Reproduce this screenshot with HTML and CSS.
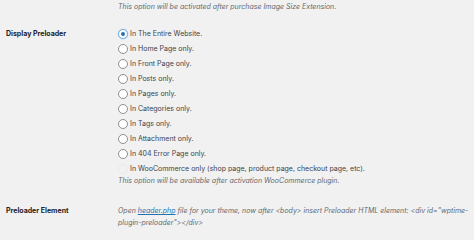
FILE: index.html
```html
<!DOCTYPE html>
<html>
<head>
<meta charset="utf-8">
<link rel="stylesheet" href="styles.css">
</head>
<body>
<div class="page">
  <p class="desc top-desc">This option will be activated after purchase Image Size Extension.</p>
  <div class="row">
    <div class="label">Display Preloader</div>
    <div class="field">
      <ul class="radios">
        <li class="opt"><span class="radio checked"></span>In The Entire Website.</li>
        <li class="opt"><span class="radio"></span>In Home Page only.</li>
        <li class="opt"><span class="radio"></span>In Front Page only.</li>
        <li class="opt"><span class="radio"></span>In Posts only.</li>
        <li class="opt"><span class="radio"></span>In Pages only.</li>
        <li class="opt"><span class="radio"></span>In Categories only.</li>
        <li class="opt"><span class="radio"></span>In Tags only.</li>
        <li class="opt"><span class="radio"></span>In Attachment only.</li>
        <li class="opt"><span class="radio"></span>In 404 Error Page only.</li>
        <li class="opt"><span class="radio disabled"></span>In WooCommerce only (shop page, product page, checkout page, etc).</li>
      </ul>
      <p class="desc">This option will be available after activation WooCommerce plugin.</p>
    </div>
  </div>
  <div class="row row-element">
    <div class="label">Preloader Element</div>
    <div class="field">
      <p class="desc desc-long">Open <a class="link" href="#">header.php</a> file for your theme, now after &lt;body&gt; insert Preloader HTML element: &lt;div id="wptime-plugin-preloader"&gt;&lt;/div&gt;</p>
    </div>
  </div>
</div>
</body>
</html>
```
FILE: styles.css
```css
html, body {
  margin: 0;
  padding: 0;
  background: #f1f1f1;
}
body {
  font-family: Inter, "Liberation Sans", sans-serif;
  font-size: 7px;
  color: #3c434a;
}
.page {
  padding: 2px 4px 0 6px;
}
p { margin: 0; }
.desc {
  font-style: italic;
  color: #646970;
  line-height: 10px;
}
.top-desc {
  margin-left: 112px;
}
.row {
  display: grid;
  grid-template-columns: 112px 1fr;
  margin-top: 14px;
}
.label {
  font-weight: 700;
  color: #1d2327;
  line-height: 15px;
}
.radios {
  list-style: none;
  margin: 0;
  padding: 0;
}
.opt {
  display: flex;
  align-items: center;
  height: 15px;
  gap: 2px;
}
.radio {
  box-sizing: border-box;
  width: 10px;
  height: 10px;
  border: 1px solid #8c8f94;
  border-radius: 50%;
  background: #fff;
  flex: none;
  position: relative;
}
.radio.checked {
  border-color: #72aee6;
  box-shadow: 0 0 0 0.5px #c5d9ed;
}
.radio.checked::after {
  content: "";
  position: absolute;
  left: 2px;
  top: 2px;
  width: 4px;
  height: 4px;
  border-radius: 50%;
  background: #2271b1;
}
.radio.disabled {
  border-color: #ebebeb;
  background: #f1f1f1;
}
.row-element {
  margin-top: 19px;
}
.row-element .label {
  line-height: 12px;
}
.desc-long {
  line-height: 12px;
}
.link {
  color: #2271b1;
  text-decoration: underline;
}
```
